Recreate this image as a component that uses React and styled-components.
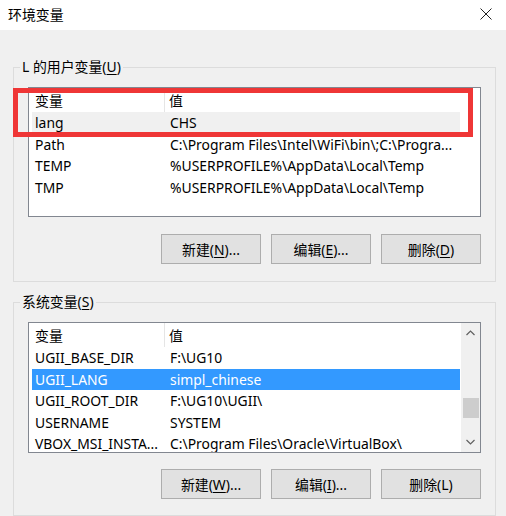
import React from "react";
import styled, { createGlobalStyle } from "styled-components";

const GlobalStyle = createGlobalStyle`
  html, body {
    margin: 0;
    padding: 0;
    background: #f0f0f0;
  }
  body {
    font-family: "Noto Sans", "Noto Sans CJK SC", sans-serif;
    font-size: 13.9px;
    color: #000;
  }
`;

const userVars = [
  { name: "lang", value: "CHS", state: "inactive" },
  { name: "Path", value: "C:\\Program Files\\Intel\\WiFi\\bin\\;C:\\Progra..." },
  { name: "TEMP", value: "%USERPROFILE%\\AppData\\Local\\Temp" },
  { name: "TMP", value: "%USERPROFILE%\\AppData\\Local\\Temp" },
];

const sysVars = [
  { name: "UGII_BASE_DIR", value: "F:\\UG10" },
  { name: "UGII_LANG", value: "simpl_chinese", state: "focus" },
  { name: "UGII_ROOT_DIR", value: "F:\\UG10\\UGII\\" },
  { name: "USERNAME", value: "SYSTEM" },
  { name: "VBOX_MSI_INSTA...", value: "C:\\Program Files\\Oracle\\VirtualBox\\" },
];

const Window = styled.div`
  position: relative;
  width: 506px;
  height: 516px;
  background: #f0f0f0;
  overflow: hidden;
  display: flex;
  flex-direction: column;
`;

const TitleBar = styled.div`
  height: 30px;
  flex: none;
  background: #fff;
  display: flex;
  align-items: center;
  justify-content: space-between;
  padding: 0 10px 2px 8px;
  box-sizing: border-box;
`;

const Close = styled.div`
  width: 20px;
  height: 20px;
  display: flex;
  align-items: center;
  justify-content: center;
`;

const Body = styled.div`
  display: flex;
  flex-direction: column;
  gap: 11px;
  padding-top: 28px;
`;

const GroupBox = styled.fieldset`
  margin: 0 10px 0 13px;
  border: 1px solid #dcdcdc;
  padding: 0 14px ${(p) => p.$bottom}px 14px;
  min-width: 0;
`;

const Legend = styled.legend`
  margin-left: -8px;
  padding: 0 2px;
  line-height: 18px;
`;

const Key = styled.span`
  text-decoration: underline;
  text-underline-offset: 2px;
`;

const ListView = styled.div`
  margin-top: 11px;
  height: ${(p) => p.$height}px;
  box-sizing: border-box;
  border: 1px solid #828790;
  background: #fff;
  display: flex;
  overflow: hidden;
`;

const ListContent = styled.div`
  flex: 1;
  min-width: 0;
  display: flex;
  flex-direction: column;
`;

const Header = styled.div`
  height: 24px;
  flex: none;
  display: grid;
  grid-template-columns: 136px 1fr;
  align-items: stretch;
`;

const HeaderCell = styled.div`
  display: flex;
  align-items: center;
  padding-left: ${(p) => (p.$first ? 6 : 4)}px;
  border-right: ${(p) => (p.$first ? "1px solid #e5e5e5" : "none")};
  box-sizing: border-box;
`;

const Row = styled.div`
  flex: none;
  width: 428px;
  margin-left: 3px;
  height: 21.5px;
  display: grid;
  grid-template-columns: 135px 1fr;
  align-items: center;
  white-space: nowrap;
  background: ${(p) =>
    p.$state === "focus" ? "#3399ff" : p.$state === "inactive" ? "#f0f0f0" : "transparent"};
  color: ${(p) => (p.$state === "focus" ? "#fff" : "#000")};
`;

const Cell = styled.div`
  padding-left: 3px;
  overflow: hidden;
`;

const ScrollBar = styled.div`
  width: 19px;
  flex: none;
  background: #f0f0f0;
  display: flex;
  flex-direction: column;
`;

const Arrow = styled.div`
  height: 20px;
  flex: none;
  display: flex;
  align-items: center;
  justify-content: center;
`;

const Track = styled.div`
  flex: 1;
  padding-top: ${(p) => p.$offset}px;
  display: flex;
  justify-content: center;
`;

const Thumb = styled.div`
  width: 16px;
  height: 20px;
  background: #cdcdcd;
`;

const ButtonRow = styled.div`
  margin-top: ${(p) => p.$gap}px;
  display: flex;
  justify-content: flex-end;
  gap: 10px;
`;

const Button = styled.button`
  width: 100px;
  height: 30px;
  box-sizing: border-box;
  background: #e1e1e1;
  border: 1px solid #adadad;
  font-family: inherit;
  font-size: inherit;
  color: #000;
  padding: 0;
`;

const Highlight = styled.div`
  position: absolute;
  left: 13px;
  top: 88px;
  width: 460px;
  height: 49px;
  box-sizing: border-box;
  border: 5px solid #ef3636;
  pointer-events: none;
`;

const Chevron = ({ up }) => (
  <svg width="9" height="6" viewBox="0 0 9 6">
    <path
      d={up ? "M0.5 5 L4.5 1 L8.5 5" : "M0.5 1 L4.5 5 L8.5 1"}
      fill="none"
      stroke="#606060"
      strokeWidth="1.2"
    />
  </svg>
);

const VarList = ({ rows, height, scroll }) => (
  <ListView $height={height}>
    <ListContent>
      <Header>
        <HeaderCell $first>变量</HeaderCell>
        <HeaderCell>值</HeaderCell>
      </Header>
      {rows.map((r) => (
        <Row key={r.name} $state={r.state}>
          <Cell>{r.name}</Cell>
          <Cell>{r.value}</Cell>
        </Row>
      ))}
    </ListContent>
    {scroll && (
      <ScrollBar>
        <Arrow>
          <Chevron up />
        </Arrow>
        <Track $offset={55}>
          <Thumb />
        </Track>
        <Arrow>
          <Chevron />
        </Arrow>
      </ScrollBar>
    )}
  </ListView>
);

export default function App() {
  return (
    <Window>
      <GlobalStyle />
      <TitleBar>
        <span>环境变量</span>
        <Close>
          <svg width="12" height="12" viewBox="0 0 12 12">
            <path d="M0.5 0.5 L11.5 11.5 M11.5 0.5 L0.5 11.5" stroke="#222" strokeWidth="1" />
          </svg>
        </Close>
      </TitleBar>
      <Body>
        <GroupBox $bottom={17}>
          <Legend>
            L 的用户变量(<Key>U</Key>)
          </Legend>
          <VarList rows={userVars} height={130} />
          <ButtonRow $gap={17}>
            <Button>
              新建(<Key>N</Key>)...
            </Button>
            <Button>
              编辑(<Key>E</Key>)...
            </Button>
            <Button>
              删除(<Key>D</Key>)
            </Button>
          </ButtonRow>
        </GroupBox>
        <GroupBox $bottom={16}>
          <Legend>
            系统变量(<Key>S</Key>)
          </Legend>
          <VarList rows={sysVars} height={131} scroll />
          <ButtonRow $gap={16}>
            <Button>
              新建(<Key>W</Key>)...
            </Button>
            <Button>
              编辑(<Key>I</Key>)...
            </Button>
            <Button>删除(L)</Button>
          </ButtonRow>
        </GroupBox>
      </Body>
      <Highlight />
    </Window>
  );
}
